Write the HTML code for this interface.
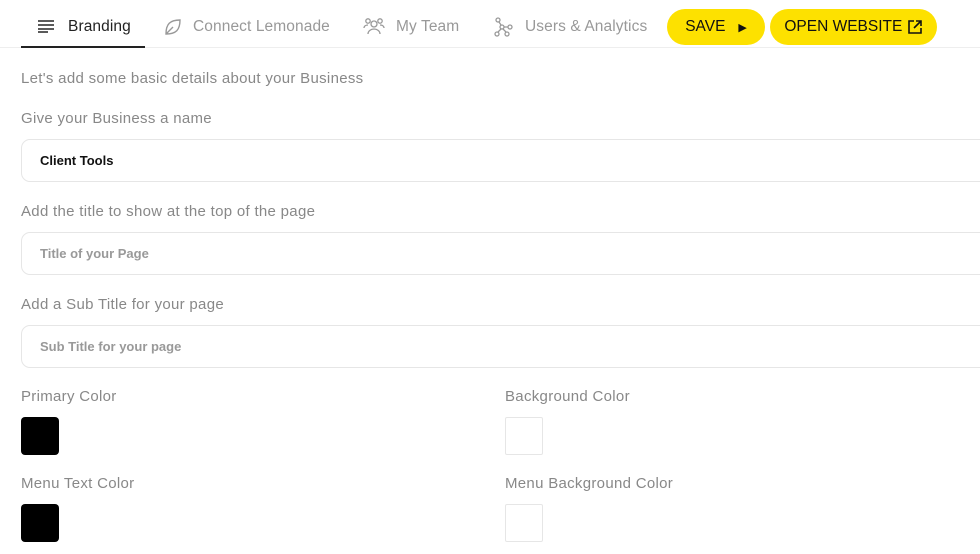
<!DOCTYPE html>
<html><head><meta charset="utf-8"><style>
*{box-sizing:border-box;margin:0;padding:0}
body{width:980px;height:554px;overflow:hidden;background:#fff;font-family:"Liberation Sans",sans-serif;position:relative;color:#888}
.abs{position:absolute}
.tab{position:absolute;top:18px;font-size:15.5px;color:#999;white-space:nowrap;letter-spacing:0.1px}
.btn{position:absolute;top:9px;height:36px;background:#fde100;border-radius:18px;font-size:15.5px;color:#111;display:flex;align-items:center;justify-content:center}
.lbl{position:absolute;left:21px;font-size:15px;color:#888;letter-spacing:0.3px}
.inp{position:absolute;left:21px;width:975px;height:43px;border:1px solid #e6e6e6;border-radius:9px;font-size:13px;font-weight:bold;padding-left:18px;display:flex;align-items:center;color:#999}
.sw{position:absolute;width:38px;height:38px;border-radius:4px}
</style></head><body>
<div class="abs" style="left:0;top:47px;width:980px;height:1px;background:#eee"></div>
<div class="abs" style="left:21px;top:46px;width:124px;height:2px;background:#222"></div>
<svg class="abs" style="left:37px;top:19px" width="18" height="14" viewBox="0 0 18 14"><g stroke="#222" stroke-width="1.5"><line x1="1" y1="2" x2="17" y2="2"/><line x1="1" y1="6" x2="17" y2="6"/><line x1="1" y1="10" x2="17" y2="10"/><line x1="1" y1="13" x2="11" y2="13"/></g></svg>
<div class="tab" style="left:68px;color:#222">Branding</div>
<svg class="abs" style="left:164px;top:18px" width="18" height="18" viewBox="0 0 18 18"><path d="M2 16 C2 6 6 2 16 2 C16 12 12 16 2 16Z M2 16 L9 9" fill="none" stroke="#999" stroke-width="1.4"/></svg>
<div class="tab" style="left:193px">Connect Lemonade</div>
<svg class="abs" style="left:363px;top:17px" width="22" height="18" viewBox="0 0 22 18" fill="none" stroke="#999" stroke-width="1.3"><circle cx="11" cy="7" r="3"/><path d="M5 17c0-3 3-5 6-5s6 2 6 5"/><circle cx="5" cy="4" r="2.2"/><circle cx="17" cy="4" r="2.2"/><path d="M1 11c0-2 2-3 4-3M21 11c0-2-2-3-4-3"/></svg>
<div class="tab" style="left:396px">My Team</div>
<svg class="abs" style="left:494px;top:17px" width="20" height="20" viewBox="0 0 20 20" fill="none" stroke="#999" stroke-width="1.3"><circle cx="4" cy="3" r="2"/><circle cx="16" cy="10" r="2"/><circle cx="3" cy="17" r="2"/><circle cx="13" cy="17" r="2"/><circle cx="8" cy="10" r="2"/><path d="M5 5l2 3M10 10h4M7 12l-3 3M9 12l3 3"/></svg>
<div class="tab" style="left:525px">Users &amp; Analytics</div>
<div class="btn" style="left:667px;width:98px">SAVE&nbsp;&nbsp;&nbsp;<span style="font-size:11px">▶</span></div>
<div class="btn" style="left:770px;width:167px">OPEN WEBSITE&nbsp;<svg width="16" height="16" viewBox="0 0 16 16" fill="none" stroke="#111" stroke-width="1.6"><path d="M7 2H2v12h12V9M9 2h5v5M14 2L7 9"/></svg></div>
<div class="lbl" style="top:70px">Let's add some basic details about your Business</div>
<div class="lbl" style="top:110px">Give your Business a name</div>
<div class="inp" style="top:139px;color:#111">Client Tools</div>
<div class="lbl" style="top:203px">Add the title to show at the top of the page</div>
<div class="inp" style="top:232px">Title of your Page</div>
<div class="lbl" style="top:296px">Add a Sub Title for your page</div>
<div class="inp" style="top:325px">Sub Title for your page</div>
<div class="lbl" style="top:388px">Primary Color</div>
<div class="lbl" style="top:388px;left:505px">Background Color</div>
<div class="sw" style="left:21px;top:417px;background:#000"></div>
<div class="sw" style="left:505px;top:417px;border:1px solid #e6e6e6;border-radius:2px"></div>
<div class="lbl" style="top:475px">Menu Text Color</div>
<div class="lbl" style="top:475px;left:505px">Menu Background Color</div>
<div class="sw" style="left:21px;top:504px;background:#000"></div>
<div class="sw" style="left:505px;top:504px;border:1px solid #e6e6e6;border-radius:2px"></div>
</body></html>
